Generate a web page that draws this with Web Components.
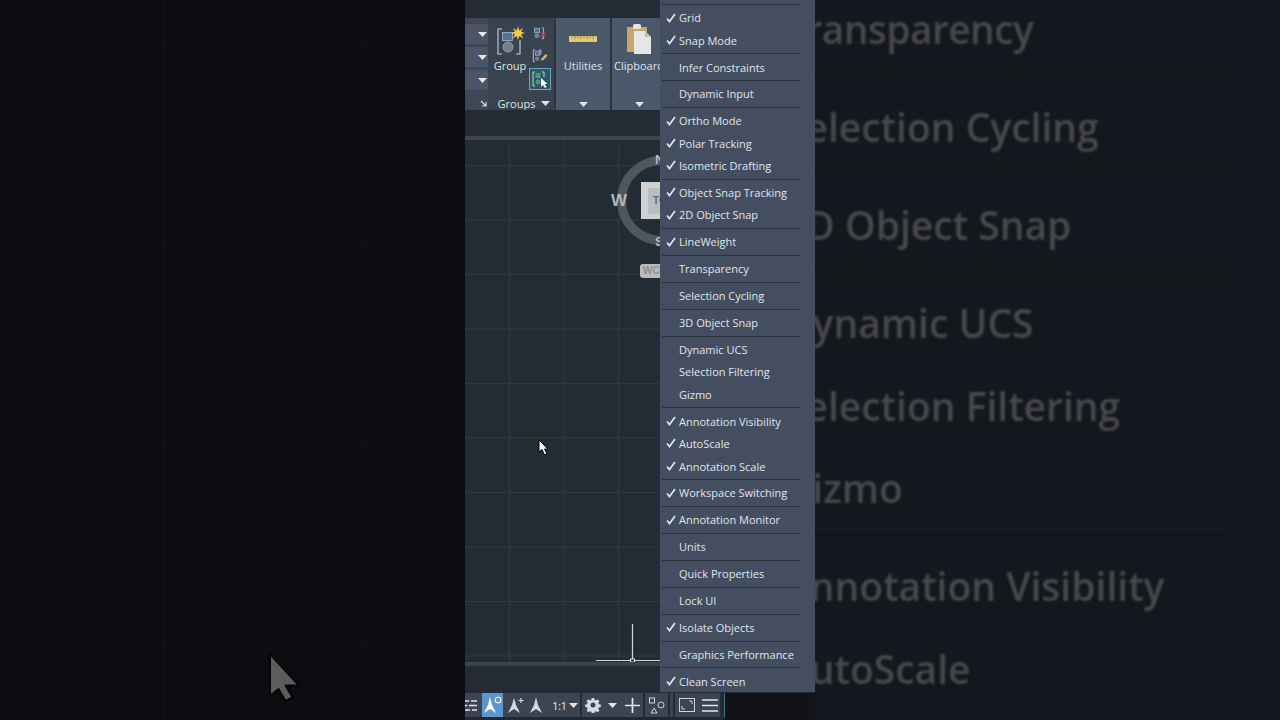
<!DOCTYPE html>
<html>
<head>
<meta charset="utf-8">
<title>Status bar customization</title>
<style>
  html, body { margin: 0; padding: 0; background: #0b0d10; }
  body { width: 1280px; height: 720px; overflow: hidden; font-family: "Open Sans", "Noto Sans", sans-serif; }
</style>
</head>
<body>
<cad-shell>
  <blur-side slot="left"></blur-side>
  <cad-window slot="center"></cad-window>
  <echo-list slot="right"></echo-list>
</cad-shell>

<script>
// menu content, one inner array per separated group; leading * means checked
const MENU_GROUPS = [
  ['*Grid', '*Snap Mode'],
  ['Infer Constraints'],
  ['Dynamic Input'],
  ['*Ortho Mode', '*Polar Tracking', '*Isometric Drafting'],
  ['*Object Snap Tracking', '*2D Object Snap'],
  ['*LineWeight'],
  ['Transparency'],
  ['Selection Cycling'],
  ['3D Object Snap'],
  ['Dynamic UCS', 'Selection Filtering', 'Gizmo'],
  ['*Annotation Visibility', '*AutoScale', '*Annotation Scale'],
  ['*Workspace Switching'],
  ['*Annotation Monitor'],
  ['Units'],
  ['Quick Properties'],
  ['Lock UI'],
  ['*Isolate Objects'],
  ['Graphics Performance'],
  ['*Clean Screen']
];

const ICONS = {
  tri: '<svg width="9" height="5" viewBox="0 0 9 5"><path d="M0 0h9L4.500 5z" fill="currentColor"/></svg>',
  group: `<svg width="24" height="28" viewBox="0 0 24 28" fill="none">
    <path d="M5 1H1v25h4M19 26h4V12" stroke="#c9ced6" stroke-width="1.100"/>
    <rect x="5.500" y="4.500" width="10" height="8" fill="#4a7396" stroke="#8fa9c2"/>
    <circle cx="11" cy="19" r="5" fill="#767d87" stroke="#9aa0a8"/></svg>`,
  spark: '<svg width="14" height="14" viewBox="0 0 16 16"><path d="M8 0l1.500 5L14 2l-2.500 4.500L16 8l-4.500 1.500L14 14l-4.500-2.500L8 16l-1.500-4.500L2 14l2.500-4.500L0 8l4.500-1.500L2 2l4.500 3z" fill="#f4c84a"/></svg>',
  groupDel: `<svg width="16" height="15" viewBox="0 0 16 15" fill="none">
    <path d="M10 1h2v13h-2" stroke="#c9ced6"/><rect x="1.500" y="1.500" width="6" height="5" fill="#4a7396" stroke="#8fa9c2"/>
    <circle cx="4.500" cy="10.500" r="3" fill="#7b828c"/><path d="M9 7l5 5M14 7l-5 5" stroke="#c8404a" stroke-width="1.600"/></svg>`,
  groupEdit: `<svg width="18" height="16" viewBox="0 0 18 16" fill="none">
    <path d="M3 1H1v14h2M8 1h2v6" stroke="#c9ced6"/><rect x="3.500" y="2.500" width="5" height="5" fill="#4a7396" stroke="#8fa9c2"/>
    <circle cx="5.500" cy="11.500" r="2.500" fill="#7b828c"/><path d="M10 14l1-3 5-5 2 2-5 5z" fill="#e0b46a"/></svg>`,
  groupSel: `<svg width="20" height="20" viewBox="0 0 20 20" fill="none">
    <path d="M5 3H3v14h2M12 3h2v5" stroke="#c9ced6"/><rect x="5.500" y="4" width="5" height="5" fill="#4f9a78"/>
    <circle cx="8" cy="13" r="2.500" fill="#4f9a78"/><path d="M11 9v9l2-2 2 3 1.500-1-2-3h3z" fill="#fff"/></svg>`,
  ruler: `<svg width="28" height="8" viewBox="0 0 28 8"><rect y="1" width="28" height="6" fill="#e3c771"/>
    <path d="M3 1v2M6 1v3M9 1v2M12 1v3M15 1v2M18 1v3M21 1v2M24 1v3" stroke="#8c7a3e" stroke-width=".8"/></svg>`,
  clipboard: `<svg width="25" height="31" viewBox="0 0 25 31"><rect x="0" y="3" width="20" height="25" fill="#c9a46f"/>
    <rect x="6" y="0" width="8" height="5" rx="1.500" fill="#e4e4e4"/><path d="M7 7h11l6 6v17H7z" fill="#e6e6e6"/><path d="M18 7v6h6z" fill="#bdbdbd"/></svg>`,
  launcher: '<svg width="7" height="7" viewBox="0 0 7 7" fill="none"><path d="M1 1l4.500 4.500M6 2v4H2" stroke="#d8dce2" stroke-width="1.100"/></svg>',
  list: '<svg width="12" height="13" viewBox="0 0 12 13" fill="none" stroke="#e2e5ea" stroke-width="1.600"><path d="M0 2h12M0 6.500h12M0 11h12"/><path d="M5 1v3M3 5v3M6 10v2" stroke="#2d3542"/></svg>',
  annoOn: '<svg width="20" height="18" viewBox="0 0 20 18"><path d="M7 1l2 8 4 8-6-4-6 4 4-8z" fill="#fff"/><circle cx="15" cy="4" r="2.800" fill="none" stroke="#fff" stroke-width="1.100"/></svg>',
  annoAuto: '<svg width="18" height="18" viewBox="0 0 18 18"><path d="M7 2l2 7 4 8-6-4-6 4 4-8z" fill="#d7dadf"/><path d="M14 2v5M11.500 4.500h5" stroke="#d7dadf" stroke-width="1.200"/></svg>',
  anno: '<svg width="14" height="17" viewBox="0 0 14 17"><path d="M7 0l2 8 4 8-6-4-6 4 4-8z" fill="#d7dadf"/></svg>',
  gear: '<svg width="16" height="16" viewBox="0 0 16 16"><path d="M6.500 0h3l.4 2.200 1.500.6 1.900-1.300 2.100 2.100-1.300 1.900.6 1.500 2.200.4v3l-2.200.4-.6 1.500 1.300 1.900-2.100 2.100-1.900-1.300-1.500.6-.4 2.200h-3l-.4-2.200-1.500-.6-1.900 1.300-2.100-2.100 1.300-1.900-.6-1.500-2.200-.4v-3l2.200-.4.600-1.500-1.300-1.900 2.100-2.100 1.900 1.300 1.500-.6z" transform="translate(1 1) scale(.875)" fill="#d7dadf"/><circle cx="8" cy="8" r="2.500" fill="#3a4452"/></svg>',
  plus: '<svg width="15" height="15" viewBox="0 0 15 15"><path d="M7.500 0v15M0 7.500h15" stroke="#e2e5ea" stroke-width="1.700"/></svg>',
  shapes: '<svg width="17" height="17" viewBox="0 0 17 17" fill="none" stroke="#cfd3d9"><rect x="1.500" y="1" width="5" height="5"/><circle cx="13" cy="8" r="3"/><path d="M6 11l3 5H3z"/></svg>',
  full: '<svg width="16" height="14" viewBox="0 0 16 14" fill="none"><rect x=".5" y=".5" width="15" height="13" stroke="#cfd3d9"/><path d="M10 3h3v3M6 11H3V8" stroke="#cfd3d9"/></svg>',
  menu: '<svg width="16" height="13" viewBox="0 0 16 13"><path d="M0 1h16M0 6.500h16M0 12h16" stroke="#e2e5ea" stroke-width="1.700"/></svg>'
};

class CadShell extends HTMLElement {
  constructor() {
    super();
    this.attachShadow({ mode: 'open' });
    this.shadowRoot.innerHTML = `
      <style>
        :host { display: grid; grid-template-columns: 465px 350px 465px; width: 1280px; height: 720px; overflow: hidden; }
      </style>
      <slot name="left"></slot>
      <slot name="center"></slot>
      <slot name="right"></slot>`;
  }
}

// faint enlarged copy of the canvas behind the video, left side
class BlurSide extends HTMLElement {
  constructor() {
    super();
    this.attachShadow({ mode: 'open' });
    this.shadowRoot.innerHTML = `
      <style>
        :host {
          display: block; position: relative; height: 720px; background-color: #0b0d10;
          background-image: linear-gradient(#111318 1px, transparent 1px), linear-gradient(90deg, #111318 1px, transparent 1px);
          background-size: 198.500px 198.500px; background-position: 163px 46px;
        }
        svg { position: absolute; left: 266px; top: 650px; }
      </style>
      <svg width="38" height="54" viewBox="0 0 38 54">
        <path d="M4 4v42l8.500-7 7 12 7-4-7-11.500H33z" fill="#5c5c5d" stroke="#040506" stroke-width="2" stroke-linejoin="round"/>
      </svg>`;
  }
}

class EchoList extends HTMLElement {
  constructor() {
    super();
    this.attachShadow({ mode: 'open' });
    const groups = [['Transparency'], ['Selection Cycling'], ['3D Object Snap'],
      ['Dynamic UCS', 'Selection Filtering', 'Gizmo'], ['Annotation Visibility', 'AutoScale', 'Annotation Scale']];
    const html = groups.map(g => g.map(t => `<div class="row">${t}</div>`).join('')).join('<div class="line"></div>');
    this.shadowRoot.innerHTML = `
      <style>
        :host { display: block; height: 720px; overflow: hidden; background: #14171d; }
        .wrap { margin: -11.750px 0 0 -31px; width: 442px; filter: blur(1px); }
        .row { height: 82.500px; line-height: 82.500px; font-size: 39px; color: #48494d; white-space: nowrap; font-weight: 600; }
        .row:first-child { letter-spacing: -.6px; }
        .line { height: 1px; margin: 3.750px 0 10.750px; background: #0d1014; }
      </style>
      <div class="wrap">${html}</div>`;
  }
}

class CadWindow extends HTMLElement {
  constructor() {
    super();
    this.attachShadow({ mode: 'open' });
    this.shadowRoot.innerHTML = `
      <style>
        :host { display: flex; flex-direction: column; position: relative; height: 720px; background: #111316; overflow: hidden; }
        .top { height: 18px; flex: none; background: #242b35; }
        .strip { height: 26px; flex: none; background: #242b35; border-bottom: 4px solid #3c4550; }
        .foot { height: 27px; flex: none; background: #242b35; border-top: 4px solid #3a434f; }
        .end { flex: 1; width: 260px; background: #212832; }
      </style>
      <div class="top"></div>
      <cad-ribbon></cad-ribbon>
      <div class="strip"></div>
      <cad-canvas></cad-canvas>
      <div class="foot"></div>
      <cad-status></cad-status>
      <div class="end"></div>
      <cad-menu></cad-menu>`;
  }
}

class CadRibbon extends HTMLElement {
  constructor() {
    super();
    this.attachShadow({ mode: 'open' });
    this.shadowRoot.innerHTML = `
      <style>
        :host { display: flex; flex: none; height: 92px; gap: 2px; color: #dfe3ea; font-size: 11px; line-height: 15px; background: #2c3440; }
        .groups { width: 89px; flex: none; background: #39434f; display: grid; grid-template-columns: 23px 66px; }
        .drops { display: flex; flex-direction: column; gap: 3px; padding-top: 6px; background: #3d4756; }
        .drop { height: 20px; background: #4a5567; display: flex; align-items: center; justify-content: flex-end; padding-right: 1px; color: #e6e8ec; }
        .launch { display: flex; justify-content: flex-end; padding: 7px 1px 0 0; }
        .main { display: grid; grid-template-columns: 44px 22px; grid-template-rows: 72px 20px; }
        .big { display: flex; flex-direction: column; align-items: center; padding-top: 10px; position: relative; }
        .big svg { margin-right: 3px; }
        .spark { position: absolute; left: 23px; top: 8px; line-height: 0; }
        .big span { margin-top: 2px; }
        .small { display: flex; flex-direction: column; align-items: center; gap: 9px; padding: 9px 6px 0 0; }
        .sel { flex: none; width: 20px; height: 20px; margin-top: -3px; border: 1px solid #6aa6c6; background: #2f5664; line-height: 0; }
        .title { grid-column: 1 / 3; display: flex; align-items: center; justify-content: center; gap: 6px; padding: 6px 0 0 6px; }
      </style>
      <div class="groups">
        <div class="drops">
          <div class="drop">${ICONS.tri}</div>
          <div class="drop">${ICONS.tri}</div>
          <div class="drop">${ICONS.tri}</div>
          <div class="launch">${ICONS.launcher}</div>
        </div>
        <div class="main">
          <div class="big">${ICONS.group}<span>Group</span><div class="spark">${ICONS.spark}</div></div>
          <div class="small">${ICONS.groupDel}${ICONS.groupEdit}<div class="sel">${ICONS.groupSel}</div></div>
          <div class="title"><span>Groups</span>${ICONS.tri}</div>
        </div>
      </div>
      <ribbon-tool width="54" label="Utilities">${ICONS.ruler}</ribbon-tool>
      <ribbon-tool width="54" label="Clipboard" clip>${ICONS.clipboard}</ribbon-tool>`;
  }
}

class RibbonTool extends HTMLElement {
  constructor() {
    super();
    this.attachShadow({ mode: 'open' });
  }

  connectedCallback() {
    const w = this.getAttribute('width');
    this.shadowRoot.innerHTML = `
      <style>
        :host { display: flex; flex: none; width: ${w}px; flex-direction: column; align-items: center; background: #4a586b; color: #dfe3ea; overflow: hidden; }
        .icon { height: 38px; display: flex; align-items: center; justify-content: center; margin-top: 2px; }
        .label { white-space: nowrap; font-size: 11px; line-height: 15px; }
        :host([clip]) .label { align-self: flex-start; padding-left: 2px; }
        .arrow { margin-top: auto; padding-bottom: 3px; line-height: 0; }
      </style>
      <div class="icon"><slot></slot></div>
      <div class="label">${this.getAttribute('label')}</div>
      <div class="arrow">${ICONS.tri}</div>`;
  }
}

class CadCanvas extends HTMLElement {
  constructor() {
    super();
    this.attachShadow({ mode: 'open' });
    this.shadowRoot.innerHTML = `
      <style>
        :host {
          display: block; flex: none; height: 522px; position: relative; overflow: hidden; background-color: #232b34;
          background-image:
            linear-gradient(#303841 1px, transparent 1px), linear-gradient(90deg, #303841 1px, transparent 1px),
            linear-gradient(#242c35 1px, transparent 1px), linear-gradient(90deg, #242c35 1px, transparent 1px);
          background-size: 54.500px 54.500px, 54.500px 54.500px, 10.900px 10.900px, 10.900px 10.900px;
          background-position: 0 25px, 44px 0, 0 25px, 44px 0;
        }
        .cube { position: absolute; left: 140px; top: 15px; width: 130px; height: 125px; }
        .wcs { position: absolute; left: 175px; top: 124px; width: 36px; height: 14px; border-radius: 3px; background: #b9bbbf; color: #8e9194; font: bold 10px/14px "Liberation Sans", sans-serif; padding-left: 3px; }
        .ucs { position: absolute; left: 131px; top: 484px; }
        .cursor { position: absolute; left: 73px; top: 299px; }
        text { font-family: "Liberation Sans", sans-serif; font-weight: bold; }
      </style>
      <svg class="cube" viewBox="0 0 130 125">
        <circle cx="56.500" cy="45.500" r="40" fill="none" stroke="#50565c" stroke-width="9"/>
        <rect x="36" y="27" width="50" height="37" fill="#cfd0d1"/>
        <rect x="43" y="33" width="40" height="26" fill="#bcbdbf"/>
        <text x="48" y="49" font-size="10" fill="#66696d">TOP</text>
        <text x="6" y="51" font-size="17" fill="#b4b7ba">W</text>
        <text x="50" y="9" font-size="13" fill="#b4b7ba">N</text>
        <text x="50" y="91" font-size="13" fill="#b4b7ba">S</text>
      </svg>
      <div class="wcs">WCS</div>
      <svg class="ucs" width="65" height="40" viewBox="0 0 65 40" fill="none">
        <path d="M36.500 0v36M0 36.500h65" stroke="#d0d4d8" stroke-width="1.200"/><rect x="34.500" y="35" width="4" height="3" fill="#232b34" stroke="#e2e5ea"/>
      </svg>
      <svg class="cursor" width="12" height="17" viewBox="0 0 12 17">
        <path d="M1 1v12l3-2.500 2.500 5.500 2.500-1-2.500-5H10z" fill="#fff" stroke="#000"/>
      </svg>`;
  }
}

class CadStatus extends HTMLElement {
  constructor() {
    super();
    this.attachShadow({ mode: 'open' });
    this.shadowRoot.innerHTML = `
      <style>
        :host { display: flex; flex: none; box-sizing: border-box; height: 24px; width: 260px; gap: 2px; color: #e0e3e8; background: #242b35; border-right: 1px solid #3d6f93; }
        .seg { display: flex; align-items: center; height: 24px; background: #3a4452; flex: none; }
        .on { width: 21px; height: 24px; background: #5b98cf; display: flex; align-items: center; justify-content: center; margin: 0 3px 0 5px; }
        .cell { display: flex; align-items: center; justify-content: center; }
        .scale { font-size: 11.500px; margin: 0 2px 0 5px; letter-spacing: -.5px; }
      </style>
      <div class="seg" style="width:115px">
        <div class="cell" style="width:12px">${ICONS.list}</div>
        <div class="on">${ICONS.annoOn}</div>
        <div class="cell" style="width:19px">${ICONS.annoAuto}</div>
        <div class="cell" style="width:22px">${ICONS.anno}</div>
        <div class="scale">1:1</div>${ICONS.tri}
      </div>
      <div class="seg" style="width:61px;padding-left:3px;box-sizing:border-box">
        ${ICONS.gear}<div class="cell" style="width:22px">${ICONS.tri}</div>
        <div class="cell" style="margin-left:2px">${ICONS.plus}</div>
      </div>
      <div class="seg" style="width:23px;justify-content:center">${ICONS.shapes}</div>
      <div class="seg" style="width:3px"></div>
      <div class="seg" style="width:45px;padding-left:4px;gap:7px;box-sizing:border-box">${ICONS.full}${ICONS.menu}</div>`;
  }
}

class MenuItem extends HTMLElement {
  constructor() {
    super();
    this.attachShadow({ mode: 'open' });
    this.shadowRoot.innerHTML = `
      <style>
        :host { display: flex; align-items: center; height: 22.400px; padding-left: 19px; position: relative; font-size: 11px; color: #e1e5eb; white-space: nowrap; }
        .check { position: absolute; left: 6px; top: 6px; display: none; }
        :host([checked]) .check { display: block; }
      </style>
      <svg class="check" width="10" height="10" viewBox="0 0 10 10" fill="none"><path d="M1 5.500L3.500 8.500 9 1" stroke="#e1e5eb" stroke-width="1.700"/></svg>
      <slot></slot>`;
  }
}

class CadMenu extends HTMLElement {
  constructor() {
    super();
    this.attachShadow({ mode: 'open' });
    const body = MENU_GROUPS.map(g => g.map(t => {
      const on = t[0] === '*';
      return `<menu-item ${on ? 'checked' : ''}>${on ? t.slice(1) : t}</menu-item>`;
    }).join('')).join('<div class="sep"></div>');
    this.shadowRoot.innerHTML = `
      <style>
        :host { display: block; position: absolute; left: 195px; top: 0; width: 155px; height: 692px; box-sizing: border-box; padding-top: 6.500px; background: #444e60; overflow: hidden; }
        .sep { height: 1px; margin: 1.770px 15px 1.770px 2px; background: #2b323e; }
        .sep.first { position: absolute; top: 4px; left: 0; width: 138px; margin: 0 0 0 2px; }
      </style>
      <div class="sep first"></div>
      ${body}`;
  }
}

customElements.define('cad-shell', CadShell);
customElements.define('blur-side', BlurSide);
customElements.define('echo-list', EchoList);
customElements.define('cad-window', CadWindow);
customElements.define('cad-ribbon', CadRibbon);
customElements.define('ribbon-tool', RibbonTool);
customElements.define('cad-canvas', CadCanvas);
customElements.define('cad-status', CadStatus);
customElements.define('menu-item', MenuItem);
customElements.define('cad-menu', CadMenu);
</script>
</body>
</html>
